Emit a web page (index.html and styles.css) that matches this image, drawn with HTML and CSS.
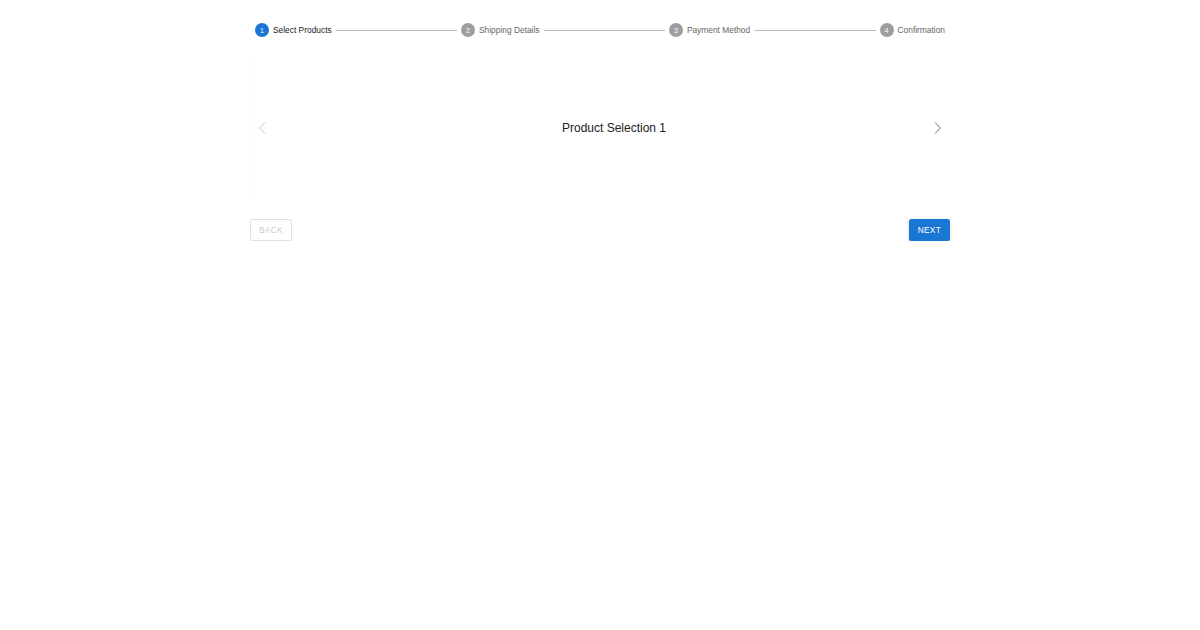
FILE: index.html
```html
<!DOCTYPE html>
<html>
<head>
<meta charset="utf-8">
<link rel="stylesheet" href="styles.css">
</head>
<body>
<div class="wrap">
  <div class="stepper">
    <div class="step active"><span class="dot">1</span><span class="label">Select Products</span></div>
    <div class="line"></div>
    <div class="step"><span class="dot">2</span><span class="label">Shipping Details</span></div>
    <div class="line"></div>
    <div class="step"><span class="dot">3</span><span class="label">Payment Method</span></div>
    <div class="line"></div>
    <div class="step"><span class="dot">4</span><span class="label">Confirmation</span></div>
  </div>
  <div class="card">
    <span class="arrow left">
      <svg width="8" height="12" viewBox="0 0 8 12"><path d="M7 0.5 L1.5 6 L7 11.5" fill="none" stroke="#bdbdbd" stroke-width="1"/></svg>
    </span>
    <div class="title">Product Selection 1</div>
    <span class="arrow right">
      <svg width="8" height="12" viewBox="0 0 8 12"><path d="M1 0.5 L6.5 6 L1 11.5" fill="none" stroke="#757575" stroke-width="1"/></svg>
    </span>
  </div>
  <div class="actions">
    <button class="btn back" disabled>Back</button>
    <button class="btn next">Next</button>
  </div>
</div>
</body>
</html>
```
FILE: styles.css
```css
html, body { margin: 0; padding: 0; background: #fff; }
body { font-family: "Liberation Sans", Arial, sans-serif; }
.wrap { width: 700px; margin: 0 auto; padding-top: 23px; }
.stepper { display: flex; align-items: center; padding: 0 5px; height: 14px; }
.step { display: flex; align-items: center; gap: 4px; }
.dot { width: 14px; height: 14px; border-radius: 50%; background: #9e9e9e; color: #fff; font-size: 7px; display: flex; align-items: center; justify-content: center; }
.step.active .dot { background: #1976d2; }
.label { font-size: 8.4px; color: #666; white-space: nowrap; }
.step.active .label { color: #222; }
.line { flex: 1; height: 1px; background: #bdbdbd; margin: 0 4px; }
.card { margin-top: 19px; height: 145px; border-radius: 8px; box-shadow: -1px 0 1px rgba(0,0,0,0.025); display: flex; align-items: center; padding: 0 8px; }
.arrow { display: flex; width: 8px; height: 12px; margin-top: -1px; }
.title { flex: 1; text-align: center; font-size: 12px; color: #222; padding-left: 28px; margin-top: -2px; }
.actions { display: flex; justify-content: space-between; margin-top: 18px; }
.btn { font-family: "Liberation Sans", Arial, sans-serif; font-size: 8.4px; font-weight: 500; letter-spacing: 0.25px; text-transform: uppercase; height: 22px; padding: 0 9px; border-radius: 2.5px; }
.back { background: #fff; color: rgba(0,0,0,0.26); border: 1px solid rgba(0,0,0,0.12); padding: 0 8px; }
.next { background: #1976d2; color: #fff; border: none; box-shadow: 0 1.5px 3px rgba(0,0,0,0.2); }
```
